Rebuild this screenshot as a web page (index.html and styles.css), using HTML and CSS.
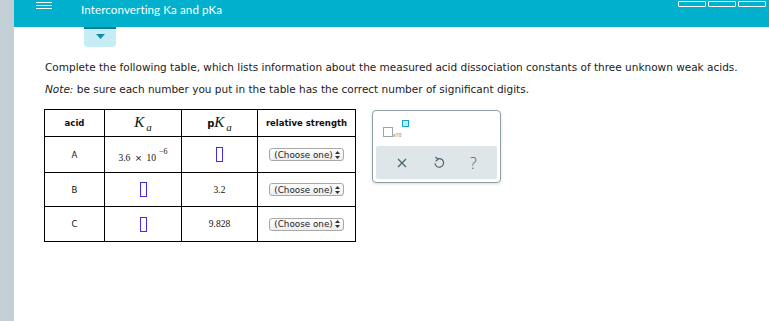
FILE: index.html
```html
<!DOCTYPE html>
<html>
<head>
    <meta http-equiv="Content-Type" content="text/html;charset=UTF-8"/>
    <title>Interconverting Ka and pKa</title>
    <link rel="stylesheet" href="styles.css">
</head>
<body>
<div class="page">
    <div class="sidebar"></div>
    <div class="main">
        <div class="topbar">
            <div class="menu"><span></span><span></span><span></span></div>
            <div class="title">Interconverting Ka and pKa</div>
            <div class="winbtns"><span></span><span></span><span></span></div>
        </div>
        <div class="tab">
            <svg width="9" height="5" viewBox="0 0 9 5"><path d="M0 0 L9 0 L4.5 5 Z" fill="#1489a8"/></svg>
        </div>
        <div class="content">
            <p class="intro">Complete the following table, which lists information about the measured acid dissociation constants of three unknown weak acids.</p>
            <p class="intro"><i>Note:</i> be sure each number you put in the table has the correct number of significant digits.</p>
            <div class="work">
                <table class="data">
                    <tr class="head">
                        <th class="c-acid">acid</th>
                        <th class="c-ka"><span class="math">K<sub>a</sub></span></th>
                        <th class="c-pka"><span class="p">p</span><span class="math">K<sub>a</sub></span></th>
                        <th class="c-rel">relative strength</th>
                    </tr>
                    <tr class="r1">
                        <td>A</td>
                        <td><span class="num">3.6 <span class="times">×</span> 10<sup>−6</sup></span></td>
                        <td><span class="blank"></span></td>
                        <td><div class="choose">(Choose one)<svg width="5" height="8" viewBox="0 0 5 8"><path d="M0 3 L2.5 0 L5 3 Z M0 5 L2.5 8 L5 5 Z" fill="#333"/></svg></div></td>
                    </tr>
                    <tr class="r2">
                        <td>B</td>
                        <td><span class="blank"></span></td>
                        <td><span class="num">3.2</span></td>
                        <td><div class="choose">(Choose one)<svg width="5" height="8" viewBox="0 0 5 8"><path d="M0 3 L2.5 0 L5 3 Z M0 5 L2.5 8 L5 5 Z" fill="#333"/></svg></div></td>
                    </tr>
                    <tr class="r3">
                        <td>C</td>
                        <td><span class="blank"></span></td>
                        <td><span class="num">9.828</span></td>
                        <td><div class="choose">(Choose one)<svg width="5" height="8" viewBox="0 0 5 8"><path d="M0 3 L2.5 0 L5 3 Z M0 5 L2.5 8 L5 5 Z" fill="#333"/></svg></div></td>
                    </tr>
                </table>
                <div class="tools">
                    <div class="tools-top">
                        <div class="sci">
                            <span class="sq"></span><span class="x10">x10</span><span class="exp"></span>
                        </div>
                    </div>
                    <div class="tools-bar">
                        <svg width="12" height="12" viewBox="0 0 12 12"><path d="M2 2 L10 10 M10 2 L2 10" stroke="#4a6470" stroke-width="1.3" fill="none"/></svg>
                        <svg width="12" height="14" viewBox="0 0 12 14"><path d="M4.2 3.2 A4.3 4.3 0 1 1 2 7.2" stroke="#4a6470" stroke-width="1.2" fill="none"/><path d="M2.4 1 L5 3.2 L2.6 5.4" stroke="#4a6470" stroke-width="1.2" fill="none"/></svg>
                        <span class="help">?</span>
                    </div>
                </div>
            </div>
        </div>
    </div>
</div>
</body>
</html>
```

FILE: styles.css
```css
body {
    margin: 0;
    padding: 0;
    background: #fff;
    font-family: "DejaVu Sans", Verdana, sans-serif;
}

.page {
    display: flex;
    width: 769px;
    height: 321px;
    overflow: hidden;
}

.sidebar {
    width: 14px;
    background-color: #c2d0d5;
}

.main {
    flex: 1;
    display: flex;
    flex-direction: column;
}

.topbar {
    height: 27px;
    background-color: #00b0cd;
    display: flex;
    align-items: flex-start;
}

.menu {
    width: 16px;
    margin: 2px 0 0 22px;
    display: flex;
    flex-direction: column;
    gap: 2px;
}

.menu span {
    display: block;
    height: 1px;
    background: #fff;
}

.title {
    margin: 3px 0 0 29px;
    font-family: "Lato", "Open Sans", sans-serif;
    font-size: 11.6px;
    color: #fff;
    letter-spacing: 0.1px;
}

.winbtns {
    margin: 1px 3px 0 auto;
    display: flex;
    gap: 2px;
}

.winbtns span {
    display: block;
    width: 26px;
    height: 4px;
    border: 1px solid #fff;
    border-radius: 1px;
}

.tab {
    margin-left: 70px;
    width: 32px;
    height: 20px;
    background: #c6edf5;
    border-top: 2px solid #0a7c92;
    border-radius: 0 0 4px 4px;
    display: flex;
    justify-content: center;
    padding-top: 5px;
    box-sizing: border-box;
}

.tab svg {
    display: block;
}

.content {
    padding-left: 31px;
}

.intro {
    margin: 14px 0 0 0;
    font-size: 10.5px;
    color: #222;
    line-height: 13px;
}

.intro + .intro {
    margin-top: 9px;
}

.work {
    display: flex;
    align-items: flex-start;
    margin-top: 13px;
    margin-left: -1px;
}

.data {
    border-collapse: collapse;
    border: 1.5px solid #000;
}

.data th,
.data td {
    border: 1.5px solid #000;
    text-align: center;
    padding: 0;
    font-size: 8.5px;
    color: #111;
}

.data th {
    font-weight: bold;
    height: 26px;
}

.c-acid { width: 59px; }
.c-ka { width: 76px; }
.c-pka { width: 75px; }
.c-rel { width: 97px; }

.r1 td { height: 35px; }
.r2 td { height: 33px; }
.r3 td { height: 34px; }

.math {
    font-family: "Liberation Serif", "Times New Roman", serif;
    font-style: italic;
    font-weight: normal;
    font-size: 15px;
}

.math sub {
    font-size: 11px;
    vertical-align: -4px;
    margin-left: 2px;
}

.p {
    font-size: 10px;
    font-weight: bold;
}

.num {
    font-family: "Liberation Serif", "Times New Roman", serif;
    font-size: 9.5px;
}

.times {
    font-family: "DejaVu Sans", sans-serif;
    font-size: 9px;
    margin: 0 2px;
}

.num sup {
    font-size: 8px;
    vertical-align: 7px;
    margin-left: 3px;
}

.blank {
    display: inline-block;
    width: 5px;
    height: 13px;
    border: 1px solid #3d2bf0;
    vertical-align: middle;
}

.choose {
    display: inline-flex;
    align-items: center;
    gap: 2px;
    height: 11px;
    padding: 0 3px 0 4px;
    border: 1px solid #a8a8a8;
    border-radius: 3px;
    background: linear-gradient(#fdfdfd, #eeeeee);
    font-size: 8.8px;
    color: #222;
    vertical-align: middle;
}

.tools {
    margin-left: 16px;
    width: 129px;
    border: 1px solid #8e9fa6;
    border-radius: 4px;
    box-shadow: 0 1px 3px rgba(0, 0, 0, 0.15);
    padding: 0 3px 3px 3px;
    box-sizing: border-box;
    margin-top: 1px;
}

.tools-top {
    height: 35px;
    position: relative;
}

.sci {
    position: absolute;
    left: 7px;
    top: 9px;
    width: 30px;
    height: 20px;
}

.sci .sq {
    position: absolute;
    left: 0;
    top: 7px;
    width: 8px;
    height: 8px;
    border: 1px solid #9aa5ab;
}

.sci .x10 {
    position: absolute;
    left: 10px;
    top: 12px;
    font-family: "Open Sans", sans-serif;
    font-size: 5px;
    color: #555;
}

.sci .exp {
    position: absolute;
    left: 19px;
    top: 0;
    width: 5px;
    height: 5px;
    border: 1px solid #1aa5c6;
    background: #b9ecf6;
}

.tools-bar {
    height: 33px;
    background: #dfe6e9;
    border-radius: 2px;
    display: flex;
    align-items: center;
    justify-content: space-around;
    padding: 0 8px;
}

.tools-bar svg {
    display: block;
}

.help {
    font-family: "Open Sans", sans-serif;
    font-size: 16px;
    font-weight: 300;
    color: #4a6470;
    line-height: 1;
}
```
